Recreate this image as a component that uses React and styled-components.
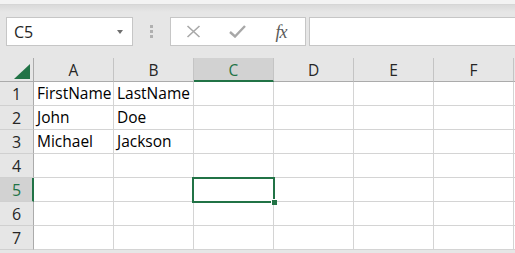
import React from 'react';
import styled, { createGlobalStyle } from 'styled-components';

const GREEN = '#217346';

const Global = createGlobalStyle`
  html, body {
    margin: 0;
    padding: 0;
    background: #e6e6e6;
  }
  body {
    font-family: 'Open Sans', 'Liberation Sans', sans-serif;
    color: #262626;
  }
`;

const Page = styled.div`
  width: 515px;
  height: 253px;
  overflow: hidden;
  display: flex;
  flex-direction: column;
  & > * {
    flex-shrink: 0;
  }
`;

const Ribbon = styled.div`
  height: 4px;
  background: #f3f3f3;
  border-bottom: 1px solid #d6d6d6;
`;

const Toolbar = styled.div`
  height: 53px;
  box-sizing: border-box;
  background: linear-gradient(#dadada, #e6e6e6 7px);
  display: flex;
  align-items: flex-start;
  padding: 12px 0 0 6px;
`;

const NameBox = styled.div`
  width: 127px;
  height: 29px;
  box-sizing: border-box;
  background: #fff;
  border: 1px solid #c6c6c6;
  display: flex;
  align-items: center;
  justify-content: space-between;
  padding: 0 9px 0 7px;
  font-size: 16px;
  color: #262626;
`;

const Caret = styled.span`
  width: 0;
  height: 0;
  border-left: 3.5px solid transparent;
  border-right: 3.5px solid transparent;
  border-top: 4px solid #6e6e6e;
`;

const Grip = styled.div`
  width: 3px;
  height: 29px;
  margin: 0 17px;
  display: flex;
  flex-direction: column;
  justify-content: center;
  gap: 2px;
  span {
    width: 3px;
    height: 3px;
    background: #b0b0b0;
  }
`;

const Actions = styled.div`
  width: 136px;
  height: 29px;
  box-sizing: border-box;
  background: #fff;
  border: 1px solid #c6c6c6;
  display: flex;
  align-items: center;
`;

const ActionIcon = styled.div`
  width: ${(p) => p.w}px;
  display: flex;
  justify-content: center;
  align-items: center;
`;

const Fx = styled.span`
  font-family: 'Liberation Serif', 'DejaVu Serif', serif;
  font-style: italic;
  font-size: 18px;
  color: #5a5a5a;
  line-height: 1;
  letter-spacing: -1px;
`;

const FormulaBar = styled.div`
  flex: 1;
  height: 29px;
  margin-left: 3px;
  box-sizing: border-box;
  background: #fff;
  border: 1px solid #c6c6c6;
  border-right: none;
`;

const Sheet = styled.div`
  display: grid;
  grid-template-columns: 34px repeat(6, 80px) 1fr;
  grid-auto-rows: 24px;
  font-size: 15.5px;
`;

const Corner = styled.div`
  box-sizing: border-box;
  background: #e6e6e6;
  border-right: 1px solid #ababab;
  border-bottom: 1px solid #ababab;
  display: flex;
  justify-content: flex-end;
  align-items: flex-end;
  padding: 0 3px 2px 0;
`;

const ColHead = styled.div`
  box-sizing: border-box;
  background: ${(p) => (p.active ? '#d2d2d2' : '#e6e6e6')};
  color: ${(p) => (p.active ? GREEN : '#262626')};
  border-right: 1px solid #c4c4c4;
  border-bottom: ${(p) => (p.active ? `2px solid ${GREEN}` : '1px solid #ababab')};
  display: flex;
  align-items: center;
  justify-content: center;
  padding-top: ${(p) => (p.active ? 1 : 0)}px;
`;

const RowHead = styled.div`
  box-sizing: border-box;
  background: ${(p) => (p.active ? '#d2d2d2' : '#e6e6e6')};
  color: ${(p) => (p.active ? GREEN : '#262626')};
  border-right: ${(p) => (p.active ? `2px solid ${GREEN}` : '1px solid #ababab')};
  border-bottom: 1px solid #d0d0d0;
  display: flex;
  align-items: center;
  justify-content: center;
  font-size: 16px;
  padding-left: ${(p) => (p.active ? 1 : 0)}px;
`;

const Cell = styled.div`
  position: relative;
  box-sizing: border-box;
  background: #fff;
  border-right: 1px solid #d4d4d4;
  border-bottom: 1px solid #d4d4d4;
  display: flex;
  align-items: flex-end;
  padding: 0 0 1px 3px;
  white-space: nowrap;
  color: #000;
`;

const Selection = styled.div`
  position: absolute;
  z-index: 2;
  top: -1px;
  left: -2px;
  right: -2px;
  bottom: -2px;
  border: 2px solid ${GREEN};
`;

const Handle = styled.div`
  position: absolute;
  right: -4px;
  bottom: -4px;
  width: 5px;
  height: 5px;
  background: ${GREEN};
  border: 1px solid #fff;
  border-right: none;
  border-bottom: none;
`;

const cols = ['A', 'B', 'C', 'D', 'E', 'F'];
const data = [
  ['FirstName', 'LastName'],
  ['John', 'Doe'],
  ['Michael', 'Jackson'],
  [],
  [],
  [],
  [],
];
const active = { row: 4, col: 2 };

export default function App() {
  return (
    <Page>
      <Global />
      <Ribbon />
      <Toolbar>
        <NameBox>
          C5
          <Caret />
        </NameBox>
        <Grip>
          <span />
          <span />
          <span />
        </Grip>
        <Actions>
          <ActionIcon w={44}>
            <svg width="15" height="13" viewBox="0 0 15 13">
              <path d="M1.5 1 L13.5 12 M13.5 1 L1.5 12" stroke="#a8a8a8" strokeWidth="1.6" fill="none" />
            </svg>
          </ActionIcon>
          <ActionIcon w={44}>
            <svg width="17" height="13" viewBox="0 0 17 13">
              <path d="M1 7 L6 11.5 L16 1" stroke="#a8a8a8" strokeWidth="2.4" fill="none" />
            </svg>
          </ActionIcon>
          <ActionIcon w={44}>
            <Fx>fx</Fx>
          </ActionIcon>
        </Actions>
        <FormulaBar />
      </Toolbar>
      <Sheet>
        <Corner>
          <svg width="16" height="15" viewBox="0 0 16 15">
            <polygon points="16,0 16,15 0,15" fill={GREEN} />
          </svg>
        </Corner>
        {cols.map((c, i) => (
          <ColHead key={c} active={i === active.col}>
            {c}
          </ColHead>
        ))}
        <ColHead />
        {data.map((row, r) => (
          <React.Fragment key={r}>
            <RowHead active={r === active.row}>{r + 1}</RowHead>
            {cols.map((c, i) => (
              <Cell key={c}>
                {row[i] || ''}
                {r === active.row && i === active.col && (
                  <Selection>
                    <Handle />
                  </Selection>
                )}
              </Cell>
            ))}
            <Cell />
          </React.Fragment>
        ))}
      </Sheet>
    </Page>
  );
}
